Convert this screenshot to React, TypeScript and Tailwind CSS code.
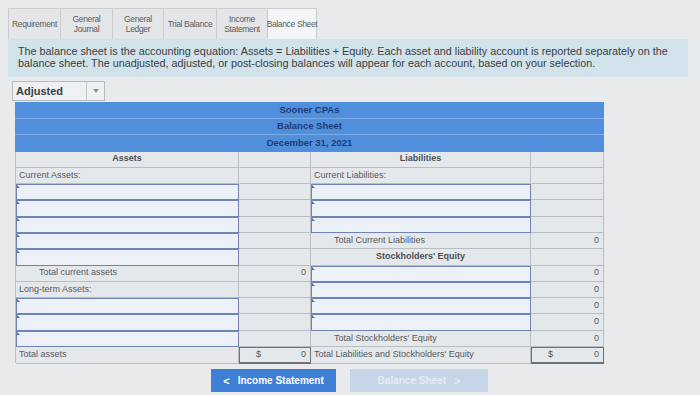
import React from 'react';

type Cell =
  | { kind: 'head'; text: string }
  | { kind: 'text'; text: string; indent?: boolean }
  | { kind: 'input' }
  | { kind: 'empty' };

type Amount = { value?: string; dollar?: boolean; total?: boolean };

interface Row {
  left: Cell;
  leftAmt: Amount;
  right: Cell;
  rightAmt: Amount;
}

const tabs: { lines: string[]; w: string }[] = [
  { lines: ['Requirement'], w: 'w-[53px]' },
  { lines: ['General', 'Journal'], w: 'w-[53px]' },
  { lines: ['General', 'Ledger'], w: 'w-[52px]' },
  { lines: ['Trial Balance'], w: 'w-[54px]' },
  { lines: ['Income', 'Statement'], w: 'w-[52px]' },
  { lines: ['Balance Sheet'], w: 'w-[50px]' },
];

const rows: Row[] = [
  { left: { kind: 'head', text: 'Assets' }, leftAmt: {}, right: { kind: 'head', text: 'Liabilities' }, rightAmt: {} },
  { left: { kind: 'text', text: 'Current Assets:' }, leftAmt: {}, right: { kind: 'text', text: 'Current Liabilities:' }, rightAmt: {} },
  { left: { kind: 'input' }, leftAmt: {}, right: { kind: 'input' }, rightAmt: {} },
  { left: { kind: 'input' }, leftAmt: {}, right: { kind: 'input' }, rightAmt: {} },
  { left: { kind: 'input' }, leftAmt: {}, right: { kind: 'input' }, rightAmt: {} },
  { left: { kind: 'input' }, leftAmt: {}, right: { kind: 'text', text: 'Total Current Liabilities', indent: true }, rightAmt: { value: '0' } },
  { left: { kind: 'input' }, leftAmt: {}, right: { kind: 'head', text: "Stockholders' Equity" }, rightAmt: {} },
  { left: { kind: 'text', text: 'Total current assets', indent: true }, leftAmt: { value: '0' }, right: { kind: 'input' }, rightAmt: { value: '0' } },
  { left: { kind: 'text', text: 'Long-term Assets:' }, leftAmt: {}, right: { kind: 'input' }, rightAmt: { value: '0' } },
  { left: { kind: 'input' }, leftAmt: {}, right: { kind: 'input' }, rightAmt: { value: '0' } },
  { left: { kind: 'input' }, leftAmt: {}, right: { kind: 'input' }, rightAmt: { value: '0' } },
  { left: { kind: 'input' }, leftAmt: {}, right: { kind: 'text', text: "Total Stockholders' Equity", indent: true }, rightAmt: { value: '0' } },
  {
    left: { kind: 'text', text: 'Total assets' },
    leftAmt: { value: '0', dollar: true, total: true },
    right: { kind: 'text', text: "Total Liabilities and Stockholders' Equity" },
    rightAmt: { value: '0', dollar: true, total: true },
  },
];

function LabelCell({ cell }: { cell: Cell }) {
  if (cell.kind === 'input') {
    return (
      <div className="relative h-full border border-[#7083b3] bg-[#edf0f6]">
        <span className="absolute left-0 top-0 h-0 w-0 border-l-[3px] border-t-[3px] border-l-[#4d6fb8] border-t-transparent" />
      </div>
    );
  }
  if (cell.kind === 'head') {
    return (
      <div className="flex h-full items-center justify-center border-b border-r border-[#b9bec4] font-bold text-[#4b4f55]">
        {cell.text}
      </div>
    );
  }
  if (cell.kind === 'text') {
    return (
      <div
        className={`flex h-full items-center border-b border-r border-[#b9bec4] text-[#55595f] ${
          cell.indent ? 'pl-[23px]' : 'pl-[3px]'
        }`}
      >
        {cell.text}
      </div>
    );
  }
  return <div className="h-full border-b border-r border-[#b9bec4]" />;
}

function AmountCell({ amt }: { amt: Amount }) {
  return (
    <div
      className={`flex h-full items-center justify-between px-[4px] text-[#55595f] ${
        amt.total ? 'border border-b-2 border-[#6d7278]' : 'border-b border-r border-[#b9bec4]'
      }`}
    >
      <span className="pl-[12px]">{amt.dollar ? '$' : ''}</span>
      <span>{amt.value ?? ''}</span>
    </div>
  );
}

export default function App() {
  return (
    <div
      className="relative h-[395px] w-[700px] overflow-hidden bg-[#e8eaec]"
      style={{ fontFamily: '"Liberation Sans", Arial, sans-serif' }}
    >
      {/* Tabs */}
      <div className="flex pl-[8px] pt-[8px]">
        {tabs.map((t, i) => {
          const active = i === tabs.length - 1;
          return (
            <div
              key={i}
              className={`flex h-[31px] ${t.w} flex-col items-center justify-center whitespace-nowrap border border-b-0 border-[#c9cdd1] text-center text-[8.5px] leading-[10px] tracking-[-0.35px] text-[#5a5e63] ${
                active ? 'bg-[#f4f5f6]' : 'bg-[#e3e5e7]'
              } ${i > 0 ? '-ml-px' : ''}`}
            >
              {t.lines.map((line) => (
                <span key={line}>{line}</span>
              ))}
            </div>
          );
        })}
      </div>

      {/* Info banner */}
      <div className="ml-[8px] mr-[12px] bg-[#d1e2ea] pb-[8px] pl-[10px] pr-[8px] pt-[6px] text-[10.8px] leading-[12px] text-[#3a3d41]">
        The balance sheet is the accounting equation: Assets = Liabilities + Equity. Each asset and liability account is
        reported separately on the balance sheet. The unadjusted, adjusted, or post-closing balances will appear for each
        account, based on your selection.
      </div>

      {/* Select */}
      <div className="ml-[12px] mt-[4px] flex h-[20px] w-[93px] border border-[#b5babf] bg-[#eef0f1]">
        <div className="flex flex-1 items-center pl-[3px] text-[11px] font-bold text-[#3b3f44]">Adjusted</div>
        <div className="flex w-[18px] items-center justify-center border-l border-[#c3c7cb]">
          <span className="h-0 w-0 border-l-[3px] border-r-[3px] border-t-[4px] border-l-transparent border-r-transparent border-t-[#8c9399]" />
        </div>
      </div>

      {/* Balance sheet table */}
      <div className="ml-[15px] mt-[1px] w-[589px] text-[9px]">
        <div className="bg-[#4f8fdc] text-center text-[9.5px] font-bold text-[#1f3c78]">
          <div className="flex h-[16.5px] items-center justify-center border-b border-[#7fabe4]">Sooner CPAs</div>
          <div className="flex h-[16.5px] items-center justify-center border-b border-[#7fabe4]">Balance Sheet</div>
          <div className="flex h-[16.5px] items-center justify-center">December 31, 2021</div>
        </div>
        <div className="border-l border-[#b9bec4] bg-[#e5e8eb]">
          {rows.map((r, i) => (
            <div key={i} className="grid h-[16.3px] grid-cols-[223px_72px_220px_73px]">
              <LabelCell cell={r.left} />
              <AmountCell amt={r.leftAmt} />
              <LabelCell cell={r.right} />
              <AmountCell amt={r.rightAmt} />
            </div>
          ))}
        </div>
      </div>

      {/* Navigation buttons */}
      <div className="ml-[211px] mt-[6px] flex gap-[14px]">
        <div className="flex h-[23px] w-[125px] items-center justify-center gap-[8px] bg-[#3e80d6] text-[10px] font-bold text-white">
          <span className="text-[11px]">&lt;</span>
          <span>Income Statement</span>
        </div>
        <div className="flex h-[23px] w-[138px] items-center justify-center gap-[8px] bg-[#c6d6e8] text-[10px] font-bold text-[#e4ebf4]">
          <span>Balance Sheet</span>
          <span className="text-[11px]">&gt;</span>
        </div>
      </div>
    </div>
  );
}
